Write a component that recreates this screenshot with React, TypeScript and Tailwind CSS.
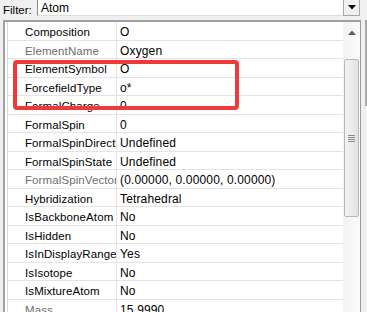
const rows: { name: string; value: string; muted?: boolean }[] = [
  { name: 'Composition', value: 'O' },
  { name: 'ElementName', value: 'Oxygen', muted: true },
  { name: 'ElementSymbol', value: 'O' },
  { name: 'ForcefieldType', value: 'o*' },
  { name: 'FormalCharge', value: '0' },
  { name: 'FormalSpin', value: '0' },
  { name: 'FormalSpinDirection', value: 'Undefined' },
  { name: 'FormalSpinState', value: 'Undefined' },
  { name: 'FormalSpinVector', value: '(0.00000, 0.00000, 0.00000)', muted: true },
  { name: 'Hybridization', value: 'Tetrahedral' },
  { name: 'IsBackboneAtom', value: 'No' },
  { name: 'IsHidden', value: 'No' },
  { name: 'IsInDisplayRange', value: 'Yes' },
  { name: 'IsIsotope', value: 'No' },
  { name: 'IsMixtureAtom', value: 'No' },
  { name: 'Mass', value: '15.9990', muted: true },
];

const PropertyRow = ({ name, value, muted }: { name: string; value: string; muted?: boolean }) => (
  <div className="flex h-[18.5px] shrink-0 border-b border-[#e4e4e4] leading-[16.5px]">
    <div
      className={`w-[109px] shrink-0 overflow-hidden whitespace-nowrap border-r border-[#e4e4e4] pl-[17px] pt-[2px] text-[11.5px] tracking-[0.1px] ${
        muted ? 'text-[#6d6d6d]' : 'text-black'
      }`}
    >
      {name}
    </div>
    <div className="flex-1 overflow-hidden whitespace-nowrap pl-[3px] pt-[2px] text-[12px] tracking-[0.15px] text-black">
      {value}
    </div>
  </div>
);

export default function App() {
  return (
    <div
      className="relative h-[312px] w-[367px] overflow-hidden bg-[#f0f0f0]"
      style={{ fontFamily: '"Liberation Sans", Arial, sans-serif' }}
    >
      {/* filter bar */}
      <div className="flex h-[20px] items-start">
        <span className="w-[37px] shrink-0 pl-[3px] pt-[4px] text-[11.5px] leading-[13px] text-black">
          Filter:
        </span>
        <div className="flex h-[16px] w-[323px] items-center border-b border-l border-[#8a8a8a] border-b-[#dcdcdc] bg-white">
          <span className="flex-1 pl-[3px] text-[12px] leading-[14px] text-black">Atom</span>
          <div className="flex h-[16px] w-[17px] items-center justify-center border border-[#a8a8a8] border-t-0 bg-[#f0f0f0]">
            <svg width="8" height="5" viewBox="0 0 8 5">
              <path d="M0 0h8L4 4.5z" fill="#000" />
            </svg>
          </div>
        </div>
      </div>

      {/* property grid */}
      <div className="ml-[3px] flex h-[292px] w-[358px] border-l-2 border-r border-t-2 border-[#a0a0a0] border-r-[#9a9a9a] bg-white">
        <div className="w-[2px] shrink-0" />
        <div className="flex w-[336px] shrink-0 flex-col border-l border-[#d8d8d8]">
          {rows.map((r) => (
            <PropertyRow key={r.name} {...r} />
          ))}
        </div>
        {/* scrollbar */}
        <div className="flex w-[17px] shrink-0 flex-col items-center bg-gradient-to-r from-[#f2f2f2] to-[#fbfbfb]">
          <div className="flex h-[17px] items-center justify-center pt-[4px]">
            <svg width="8" height="5" viewBox="0 0 8 5">
              <path d="M0 5h8L4 0.5z" fill="#5e5e5e" />
            </svg>
          </div>
          <div className="mt-[20px] flex h-[158px] w-[15px] items-center justify-center rounded-[2px] border border-[#b8b8b8] bg-gradient-to-r from-[#f4f4f4] to-[#e2e2e2]">
            <div className="flex flex-col gap-px">
              <div className="h-px w-[7px] bg-[#8a8a8a]" />
              <div className="h-px w-[7px] bg-[#8a8a8a]" />
              <div className="h-px w-[7px] bg-[#8a8a8a]" />
              <div className="h-px w-[7px] bg-[#8a8a8a]" />
            </div>
          </div>
        </div>
      </div>

      {/* window edge */}
      <div className="absolute right-0 top-[20px] h-[86px] w-[2px] bg-[#a9a9a9]" />

      {/* highlight box */}
      <div className="absolute left-[13px] top-[60px] h-[50px] w-[226px] rounded-[4px] border-[4px] border-[#ef3a3a]" />
    </div>
  );
}
